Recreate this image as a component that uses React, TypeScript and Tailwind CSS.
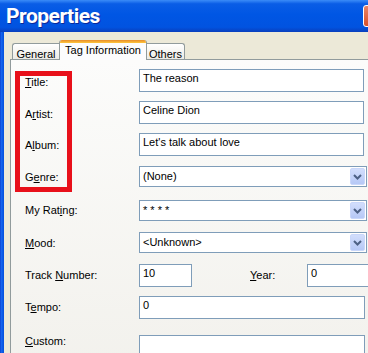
import React from "react";

function Chevron() {
  return (
    <svg width="9" height="6" viewBox="0 0 9 6">
      <path d="M1 1 L4.5 4.5 L8 1" fill="none" stroke="#4d6185" strokeWidth="2" />
    </svg>
  );
}

function TextField({ value, className }: { value: string; className: string }) {
  return (
    <div
      className={
        "h-[23px] border border-[#7f9db9] bg-white pl-[3px] pt-[2px] leading-[13px] whitespace-nowrap overflow-hidden shrink-0 " +
        className
      }
    >
      {value}
    </div>
  );
}

function Combo({ value }: { value: string }) {
  return (
    <div className="h-[21px] w-[228px] shrink-0 border border-[#7f9db9] bg-white flex items-center pl-[3px] pr-px">
      <span className="flex-1 leading-[13px] whitespace-nowrap">{value}</span>
      <div className="w-[15px] h-[17px] rounded-[2px] border border-[#c9d7fa] bg-[linear-gradient(to_bottom,#d2defc,#b6c8f6)] flex items-center justify-center">
        <Chevron />
      </div>
    </div>
  );
}

function Row({
  label,
  labelClass,
  rowClass,
  children,
}: {
  label: React.ReactNode;
  labelClass: string;
  rowClass: string;
  children: React.ReactNode;
}) {
  return (
    <div className={"flex items-start " + rowClass}>
      <div className={"w-[114px] shrink-0 leading-[13px] whitespace-nowrap " + labelClass}>{label}</div>
      {children}
    </div>
  );
}

export default function App() {
  return (
    <div className="w-[368px] h-[353px] overflow-hidden relative flex flex-col bg-[#ece9d8] font-['Liberation_Sans',Arial,sans-serif] text-[11px] text-black">
      {/* Title bar */}
      <div className="h-[32px] shrink-0 relative bg-[linear-gradient(to_bottom,#3b8cf8_0%,#0a5de6_12%,#0056e4_45%,#0153e0_85%,#0a3fbd_100%)]">
        <div className="pl-[6px] pt-[6px] font-['Roboto',sans-serif] font-bold text-[21px] leading-[21px] tracking-[-0.5px] text-white [text-shadow:1px_1px_0_#0b2a9a]">
          Properties
        </div>
        <div className="absolute left-[363px] top-[5px] w-[22px] h-[22px] rounded-[3px] border border-white bg-[linear-gradient(to_bottom,#e98466,#d9502b)]" />
      </div>
      {/* Body */}
      <div className="flex-1 flex min-h-0">
        <div className="w-[4px] shrink-0 bg-[linear-gradient(to_right,#0b3fcf,#1766ee,#0a5ae6,#0550dc)]" />
        <div className="flex-1 pl-[6px] flex flex-col min-w-0">
          {/* Tabs */}
          <div className="h-[27px] shrink-0 flex items-end pl-[2px]">
            <div className="w-[47px] h-[16px] border-l border-t border-[#919b9c] rounded-tl-[3px] bg-[linear-gradient(to_bottom,#ffffff,#ecebe5)] text-center pt-[4px] leading-[13px]">
              General
            </div>
            <div className="w-[88px] h-[20px] -mb-px relative z-10 border-x border-[#919b9c] rounded-t-[3px] bg-[#fcfcfe] text-center leading-[13px] overflow-hidden">
              <div className="h-[3px] bg-[linear-gradient(to_bottom,#e68b2c,#ffc73c)]" />
              <div className="pt-[1px]">Tag Information</div>
            </div>
            <div className="w-[38px] h-[16px] border-r border-t border-[#919b9c] rounded-tr-[3px] bg-[linear-gradient(to_bottom,#ffffff,#ecebe5)] text-center pt-[4px] leading-[13px]">
              Others
            </div>
          </div>
          {/* Panel */}
          <div className="flex-1 border-t border-l border-[#919b9c] bg-[linear-gradient(to_bottom,#fcfcfb,#f2f1ec)] pt-[9px] pl-[14px]">
            <Row label={<><u>T</u>itle:</>} labelClass="pt-[7px]" rowClass="h-[32px]">
              <TextField value="The reason" className="w-[225px]" />
            </Row>
            <Row label={<>A<u>r</u>tist:</>} labelClass="pt-[7px]" rowClass="h-[32px]">
              <TextField value="Celine Dion" className="w-[225px]" />
            </Row>
            <Row label={<>A<u>l</u>bum:</>} labelClass="pt-[6px]" rowClass="h-[33px]">
              <TextField value="Let's talk about love" className="w-[225px]" />
            </Row>
            <Row label={<>G<u>e</u>nre:</>} labelClass="pt-[5px]" rowClass="h-[34px]">
              <Combo value="(None)" />
            </Row>
            <Row label={<>My Rat<u>i</u>ng:</>} labelClass="pt-[4px]" rowClass="h-[32px]">
              <Combo value="* * * *" />
            </Row>
            <Row label={<><u>M</u>ood:</>} labelClass="pt-[5px]" rowClass="h-[32px]">
              <Combo value="<Unknown>" />
            </Row>
            <Row label={<>Track <u>N</u>umber:</>} labelClass="pt-[5px]" rowClass="h-[32px]">
              <TextField value="10" className="w-[53px]" />
              <div className="ml-[58px] w-[57px] shrink-0 pt-[5px] leading-[13px]">
                <u>Y</u>ear:
              </div>
              <TextField value="0" className="w-[80px]" />
            </Row>
            <Row label={<>T<u>e</u>mpo:</>} labelClass="pt-[5px]" rowClass="h-[39px]">
              <TextField value="0" className="w-[226px]" />
            </Row>
            <Row label={<><u>C</u>ustom:</>} labelClass="pt-0" rowClass="h-[40px]">
              <div className="w-[226px] h-[40px] shrink-0 border border-[#7f9db9] bg-white" />
            </Row>
          </div>
        </div>
      </div>
      {/* Annotation box */}
      <div className="absolute left-[15px] top-[71px] w-[57px] h-[121px] border-[5px] border-[#e8101a]" />
    </div>
  );
}
